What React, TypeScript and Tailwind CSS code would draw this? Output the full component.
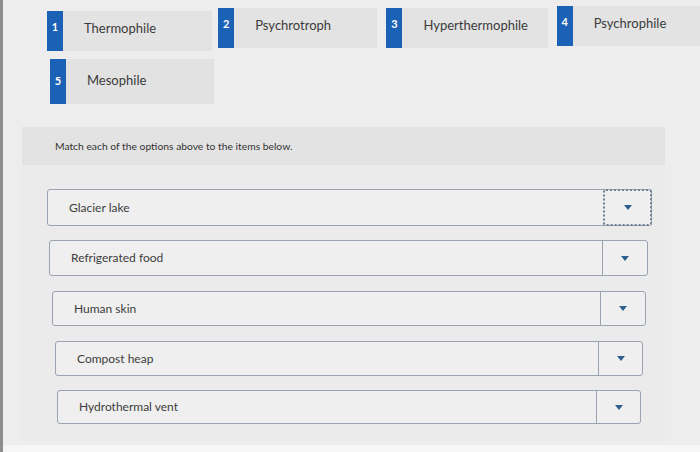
const font = { fontFamily: '"Lato", "Open Sans", "Liberation Sans", sans-serif' };

const options = [
  { n: '1', label: 'Thermophile', mt: 'mt-[11px]', ml: 'ml-[44px]', w: 'w-[166px]' },
  { n: '2', label: 'Psychrotroph', mt: 'mt-[8px]', ml: 'ml-[6px]', w: 'w-[160px]' },
  { n: '3', label: 'Hyperthermophile', mt: 'mt-[8px]', ml: 'ml-[9px]', w: 'w-[162px]' },
  { n: '4', label: 'Psychrophile', mt: 'mt-[6px]', ml: 'ml-[9px]', w: 'w-[144px]' },
];

const items = [
  { label: 'Glacier lake', cls: 'ml-[44px] w-[605px] h-[37px]', drop: 'w-[49px]', focus: true },
  { label: 'Refrigerated food', cls: 'ml-[46px] w-[599px] h-[36px] mt-[14px]', drop: 'w-[45px]' },
  { label: 'Human skin', cls: 'ml-[49px] w-[594px] h-[35px] mt-[15px]', drop: 'w-[45px]' },
  { label: 'Compost heap', cls: 'ml-[52px] w-[588px] h-[35px] mt-[15px]', drop: 'w-[44px]' },
  { label: 'Hydrothermal vent', cls: 'ml-[54px] w-[584px] h-[34px] mt-[14px]', drop: 'w-[44px]' },
];

function Caret() {
  return (
    <svg width="8" height="5" viewBox="0 0 8 5">
      <path d="M0 0 H8 L4 5 Z" fill="#2e5f8f" />
    </svg>
  );
}

function Option({ n, label, mt, ml, w }: { n: string; label: string; mt: string; ml: string; w: string }) {
  return (
    <div className={`flex h-[40px] ${mt} ${ml} ${w} bg-[#e3e3e3]`}>
      <div className="w-[16px] h-full bg-[#1b61b5] flex justify-center pt-[10px] text-white text-[11px] font-bold leading-none">
        {n}
      </div>
      <div className="flex-1 flex items-center pl-[21px] pb-[4px] text-[13px] text-[#3b3b3b]">{label}</div>
    </div>
  );
}

export default function App() {
  return (
    <div
      style={font}
      className="relative w-[700px] h-[452px] overflow-hidden bg-[#ededed] border-l-[3px] border-[#8d8d8d]"
    >
      <div className="flex items-start">
        {options.map((o) => (
          <Option key={o.n} {...o} />
        ))}
      </div>

      <div className="flex">
        <div className="flex h-[45px] mt-[8px] ml-[47px] w-[164px] bg-[#e2e2e2]">
          <div className="w-[16px] h-full bg-[#1b61b5] flex justify-center pt-[16px] text-white text-[11px] font-bold leading-none">
            5
          </div>
          <div className="flex-1 flex items-center pl-[21px] pb-[2px] text-[13px] text-[#3b3b3b]">Mesophile</div>
        </div>
      </div>

      <div className="mt-[23px] ml-[19px] w-[643px] h-[314px] bg-[#ebebeb]">
        <div className="h-[38px] bg-[#e3e3e3] flex items-center pl-[33px] pt-[2px] text-[10.3px] text-[#333]">
          Match each of the options above to the items below.
        </div>
        <div className="pt-[24px] flex flex-col -ml-[19px]">
          {items.map((it) => (
            <div
              key={it.label}
              className={`flex ${it.cls} border border-[#9aa3b0] rounded-[3px] bg-[#efefef]`}
            >
              <div className="flex-1 flex items-center pl-[21px] text-[12px] text-[#3d3d3d]">{it.label}</div>
              {it.focus ? (
                <div className={`${it.drop} -my-px -mr-px border-2 border-dotted border-[#6f7f95] rounded-[3px] flex items-center justify-center`}>
                  <Caret />
                </div>
              ) : (
                <div className={`${it.drop} border-l border-[#9aa3b0] flex items-center justify-center`}>
                  <Caret />
                </div>
              )}
            </div>
          ))}
        </div>
      </div>

      <div className="absolute left-0 right-0 bottom-0 h-[7px] bg-[#f6f6f6]" />
    </div>
  );
}
